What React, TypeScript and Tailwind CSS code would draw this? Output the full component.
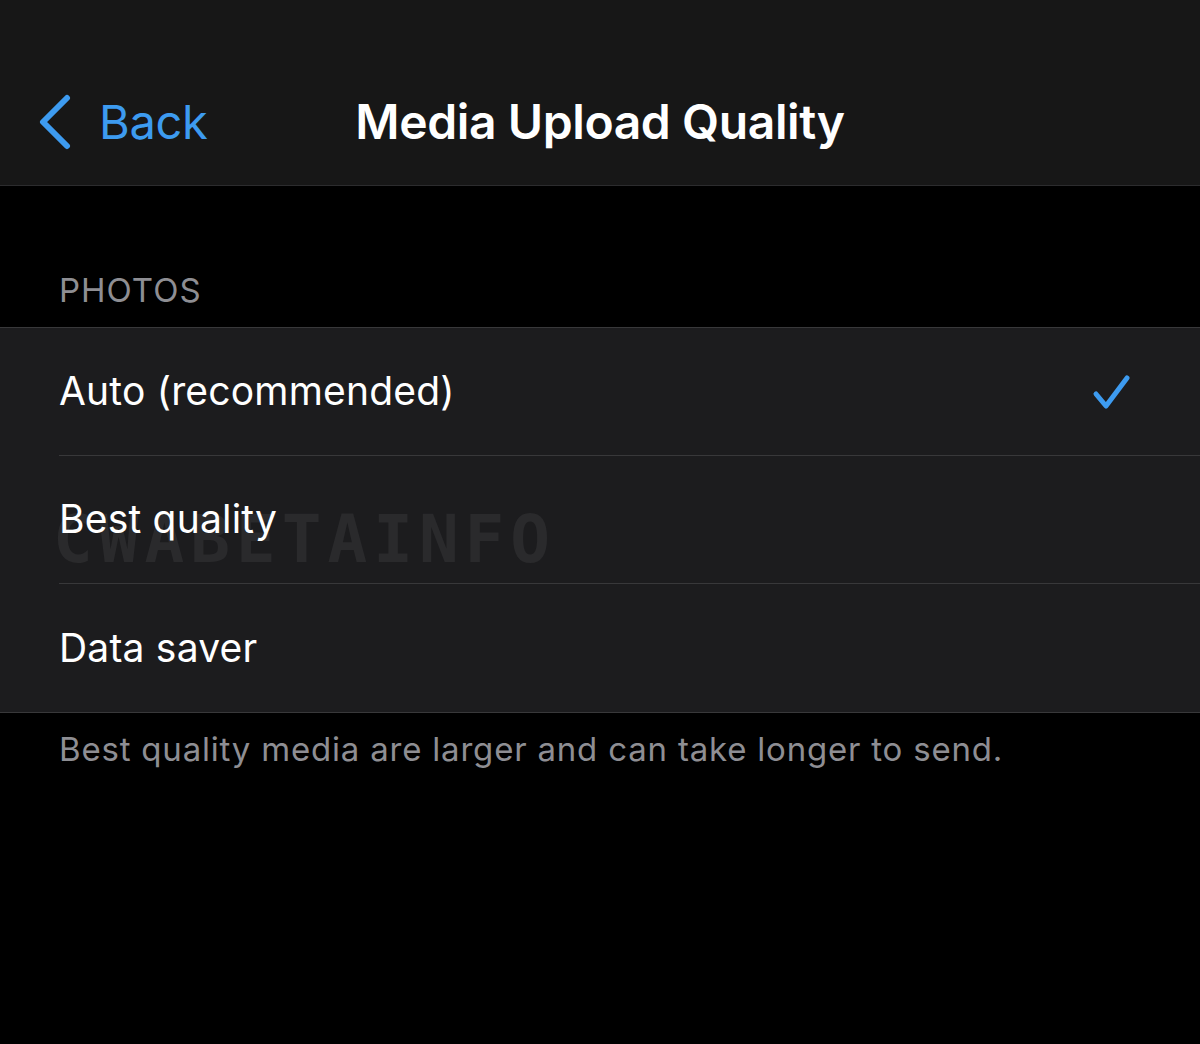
import React from "react";

export default function App() {
  const rows = ["Auto (recommended)", "Best quality", "Data saver"];
  return (
    <div
      className="w-[1200px] h-[1044px] bg-black text-white overflow-hidden"
      style={{ fontFamily: "Inter, 'Noto Sans', sans-serif" }}
    >
      <header className="relative h-[186px] bg-[#171717] border-b border-[#2c2c2e] flex items-center pt-[58px]">
        <div className="flex items-center pl-[37px] gap-[27px]">
          <svg width="35" height="56" viewBox="0 0 35 56" fill="none">
            <path
              d="M30 4 L6 28 L30 52"
              stroke="#3d9bf0"
              strokeWidth="6"
              strokeLinecap="round"
              strokeLinejoin="round"
            />
          </svg>
          <span className="text-[47px] leading-none text-[#3d9bf0] tracking-[-0.3px]">Back</span>
        </div>
        <h1 className="absolute left-0 right-0 top-[122px] -translate-y-1/2 text-center text-[48px] font-semibold leading-none tracking-[-0.4px]">
          Media Upload Quality
        </h1>
      </header>

      <div className="h-[141px] flex items-end pb-[20px] pl-[59px]">
        <span className="text-[33px] leading-none text-[#8e8e93] tracking-[1px]">PHOTOS</span>
      </div>

      <div className="bg-[#1c1c1e] border-t border-b border-[#38383a]">
        {rows.map((r, i) => (
          <div key={r} className="relative pl-[59px]">
            {i === 1 && (
              <span
                className="absolute left-[53px] top-[51px] text-[66px] font-bold leading-none text-[#2a2a2c] tracking-[6px] select-none"
                style={{ fontFamily: "'DejaVu Sans Mono', monospace" }}
              >
                CWABETAINFO
              </span>
            )}
            <div
              className={
                "h-[128px] flex items-center pr-[68px] " +
                (i < rows.length - 1 ? "border-b border-[#38383a]" : "")
              }
            >
              <span className="relative text-[39px] leading-none pb-[2px] tracking-[0.2px]">{r}</span>
              {i === 0 && (
                <svg className="ml-auto" width="40" height="38" viewBox="0 0 40 38" fill="none">
                  <path
                    d="M4 21 L14 33 L35 5"
                    stroke="#3d9bf0"
                    strokeWidth="5"
                    strokeLinecap="round"
                    strokeLinejoin="round"
                  />
                </svg>
              )}
            </div>
          </div>
        ))}
      </div>

      <p className="pl-[59px] pt-[20px] text-[33px] leading-none text-[#8e8e93] tracking-[0.8px]">
        Best quality media are larger and can take longer to send.
      </p>
    </div>
  );
}
